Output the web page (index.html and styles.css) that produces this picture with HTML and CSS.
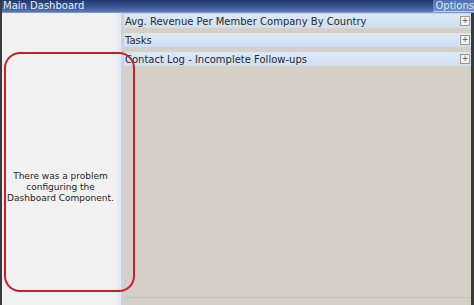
FILE: index.html
```html
<!DOCTYPE html>
<html>
<head>
<meta charset="utf-8">
<link rel="stylesheet" href="styles.css">
</head>
<body>
<div class="frame">
  <div class="topbar">
    <span class="title">Main Dashboard</span>
    <span class="options">Options</span>
  </div>
  <div class="main">
    <div class="left">
      <div class="msg">There was a problem<br>configuring the<br>Dashboard Component.</div>
      <div class="strip"></div>
    </div>
    <div class="sep"></div>
    <div class="content">
      <div class="row"><span>Avg. Revenue Per Member Company By Country</span><span class="plus">+</span></div>
      <div class="row"><span>Tasks</span><span class="plus">+</span></div>
      <div class="row"><span>Contact Log - Incomplete Follow-ups</span><span class="plus">+</span></div>
      <div class="fill"></div>
      <div class="bottomline"></div>
    </div>
  </div>
  <div class="annotation"></div>
</div>
</body>
</html>
```
FILE: styles.css
```css
html, body {
  margin: 0;
  padding: 0;
}
body {
  width: 474px;
  height: 305px;
  overflow: hidden;
  background: #3a3a3a;
  font-family: "DejaVu Sans", Verdana, sans-serif;
}
.frame {
  position: relative;
  width: 474px;
  height: 305px;
  display: flex;
  flex-direction: column;
}
.topbar {
  height: 12px;
  margin: 0 0 0 2px;
  display: flex;
  justify-content: space-between;
  align-items: stretch;
  background: linear-gradient(to bottom, #23386f 0%, #3a5592 55%, #5a78b4 100%);
  font-size: 10px;
  line-height: 11px;
  color: #ffffff;
  border-bottom: 1px solid #7f98c6;
}
.title {
  padding-left: 1px;
  color: #e8eef8;
}
.options {
  padding: 0 0 0 2px;
  background: linear-gradient(to bottom, #4f6fae 0%, #6e8ecb 100%);
  color: #d8e6f8;
  border-bottom: 1px solid #b8cbea;
}
.main {
  flex: 1;
  display: flex;
  margin: 0 3px 0 2px;
}
.left {
  width: 119px;
  background: #f1f1f1;
  display: flex;
  position: relative;
}
.msg {
  flex: 1;
  text-align: center;
  font-size: 9px;
  line-height: 11px;
  color: #262626;
  padding-top: 158px;
  padding-left: 2px;
}
.strip {
  width: 4px;
  background: #e6ebf3;
}
.sep {
  width: 3px;
  background: #c9d3e2;
}
.content {
  flex: 1;
  background: #d4d0c8;
  display: flex;
  flex-direction: column;
  gap: 5px;
  padding-top: 1px;
}
.row {
  height: 14px;
  display: flex;
  align-items: center;
  justify-content: space-between;
  background: linear-gradient(to bottom, #dce8f6 0%, #cfdff2 100%);
  font-size: 10px;
  color: #2a2a2a;
  padding: 0 0 0 1px;
}
.plus {
  width: 8px;
  height: 8px;
  margin-right: 1px;
  border: 1px solid #9a9a9a;
  background: #f2f2f2;
  color: #555555;
  font-size: 8px;
  line-height: 8px;
  text-align: center;
}
.fill {
  flex: 1;
}
.bottomline {
  height: 1px;
  background: #c8c4bc;
  margin-bottom: 7px;
}
.annotation {
  position: absolute;
  left: 4px;
  top: 52px;
  width: 127px;
  height: 236px;
  border: 2px solid #c8202a;
  border-radius: 16px;
}
```
